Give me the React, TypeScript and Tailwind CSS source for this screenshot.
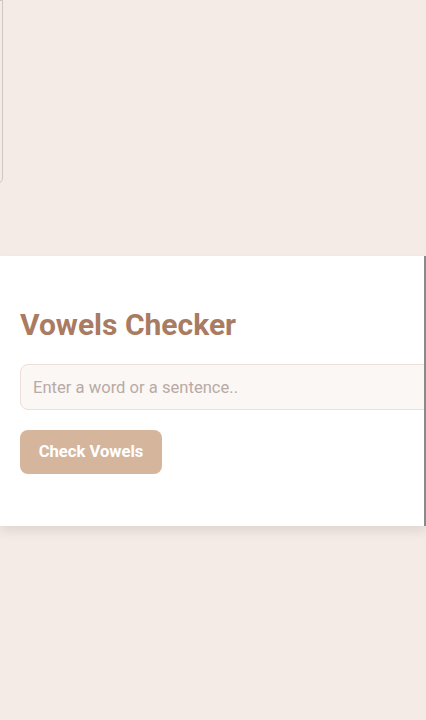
import React, { useState } from 'react';

const App: React.FC = () => {
  const [text, setText] = useState('');

  return (
    <div className="min-h-[720px] w-full overflow-hidden bg-[#f4eae6] font-['Roboto',sans-serif]">
      {/* leftover panel peeking from the left edge */}
      <div className="-ml-[300px] h-[184px] w-[303px] rounded-br-md border border-[#cfc6c3] bg-[#f4eae6]" />

      <section className="mt-[72px] w-full overflow-hidden border-r-2 border-r-[#8a8a8a] bg-white px-5 pt-[52px] pb-[52px] shadow-[0_6px_10px_rgba(0,0,0,0.08)]">
        <h1 className="text-[30px] leading-[34px] font-bold text-[#a97b63]">Vowels Checker</h1>
        <input
          value={text}
          onChange={(e) => setText(e.target.value)}
          placeholder="Enter a word or a sentence.."
          className="mt-[22px] block h-[46px] w-[440px] rounded-lg border border-[#ecdfdc] bg-[#fbf7f5] px-3 text-[16.6px] text-[#6b5a52] placeholder:text-[#b8aaa5] outline-none"
        />
        <button className="mt-[20px] h-[44px] w-[142px] rounded-lg bg-[#d5b69d] text-[16.6px] font-bold text-white">
          Check Vowels
        </button>
      </section>
    </div>
  );
};

export default App;
